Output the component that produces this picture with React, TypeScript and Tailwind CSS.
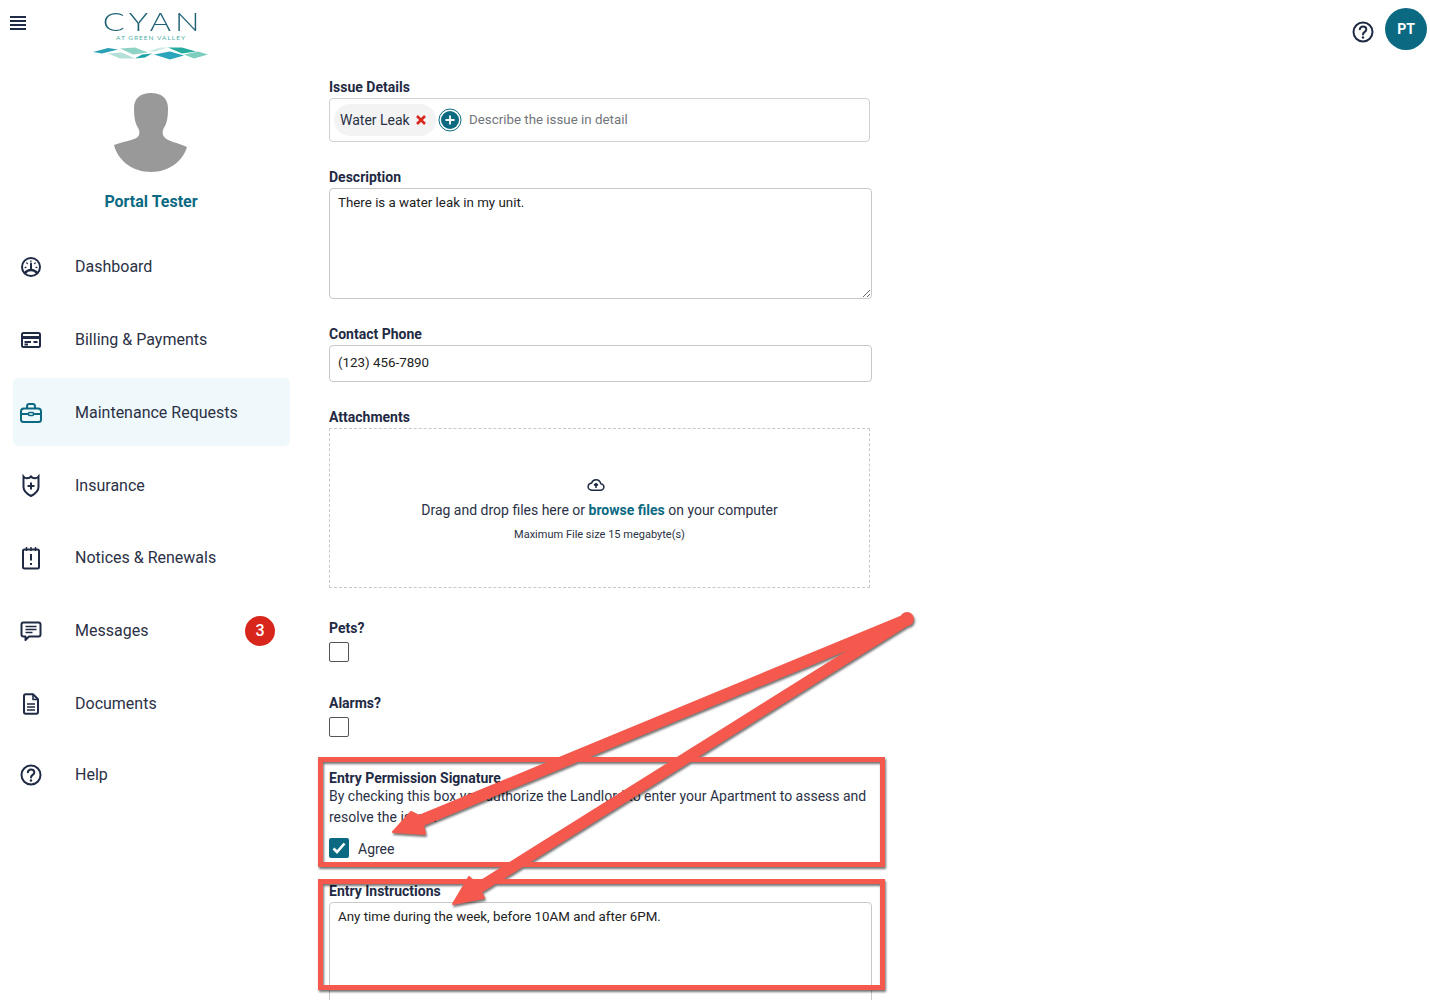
import { ReactNode } from "react";

const ink = "#1f2a44";

function GaugeIcon() {
  return (
    <svg width="24" height="24" viewBox="0 0 24 24" fill="none" stroke={ink} strokeWidth="2" strokeLinecap="round">
      <circle cx="12" cy="12" r="9" />
      <path d="M12 13.500V8.500" strokeWidth="2" />
      <path d="M6 18c1.500-2 3.500-3 6-3s4.500 1 6 3" strokeWidth="2.600" />
      <path d="M6.200 12.500l.8-.2M7.800 8l.6.6M11.900 5.800v.6M16.200 8l-.6.6M17.800 12.500l-.8-.2" strokeWidth="1.300" />
    </svg>
  );
}

function CardIcon() {
  return (
    <svg width="24" height="24" viewBox="0 0 24 24" fill="none" stroke={ink} strokeWidth="2">
      <rect x="3" y="5" width="18" height="14" rx="1.500" />
      <path d="M3 9.500h18" strokeWidth="3" />
      <path d="M5.500 14h6.500M5.500 16.500h3.500M14.500 14h4" strokeWidth="1.800" />
    </svg>
  );
}

function BriefcaseIcon() {
  return (
    <svg width="24" height="24" viewBox="0 0 24 24" fill="none" stroke="#0b6a82" strokeWidth="2">
      <path d="M2 10.500c0-2 1-3 3-3h14c2 0 3 1 3 3v8c0 1.500-1 2.500-2.500 2.500h-15C3 21 2 20 2 18.500z" />
      <path d="M8 7.500V5.500C8 4 9 3 10 3h4c1 0 2 1 2 2.500v2" />
      <path d="M2 13h7M15 13h7" />
      <rect x="9.500" y="11.500" width="5" height="3" rx="1" strokeWidth="1.600" />
    </svg>
  );
}

function ShieldIcon() {
  return (
    <svg width="24" height="24" viewBox="0 0 24 24" fill="none" stroke={ink} strokeWidth="2" strokeLinejoin="miter">
      <path d="M4.500 2.500v10.500c0 4 3.200 6.800 7.500 9 4.300-2.200 7.500-5 7.500-9V2.500c-1 1.300-3 2-4.500 1.500-1 0-2.200-.6-3-1.500-.8.900-2 1.500-3 1.500-1.500.5-3.500-.2-4.500-1.500z" />
      <path d="M12 8.500v7M8.500 12h7" />
    </svg>
  );
}

function NotepadIcon() {
  return (
    <svg width="24" height="24" viewBox="0 0 24 24" fill="none" stroke={ink} strokeWidth="2">
      <rect x="4" y="3.500" width="16" height="19" rx="1.500" />
      <path d="M7.500 1v4M12 1v4M16.500 1v4" strokeWidth="1.500" />
      <path d="M12 8v6.500M12 17v2" />
    </svg>
  );
}

function MessageIcon() {
  return (
    <svg width="24" height="24" viewBox="0 0 24 24" fill="none" stroke={ink} strokeWidth="2" strokeLinejoin="round">
      <path d="M4.500 3.500h15c1 0 2 1 2 2v10c0 1-1 2-2 2H10l-3.500 3.500v-3.500h-2c-1 0-2-1-2-2v-10c0-1 1-2 2-2z" />
      <path d="M6.500 7.500h11M6.500 10.500h11M6.500 13.500h7" strokeWidth="1.600" />
    </svg>
  );
}

function DocIcon() {
  return (
    <svg width="24" height="24" viewBox="0 0 24 24" fill="none" stroke={ink} strokeWidth="2" strokeLinejoin="round">
      <path d="M5 4c0-1 .8-1.700 1.700-1.700H14l5 5V20c0 1-.8 1.700-1.700 1.700H6.700C5.800 21.700 5 21 5 20z" />
      <path d="M14 2.500v5h5" strokeWidth="1.600" />
      <path d="M8 12h8M8 15h8M8 18h8" strokeWidth="1.500" />
    </svg>
  );
}

function HelpIcon() {
  return (
    <svg width="24" height="24" viewBox="0 0 24 24" fill="none" stroke={ink} strokeWidth="2" strokeLinecap="round">
      <circle cx="12" cy="12" r="9.500" />
      <path d="M8.800 9.300c.3-1.700 1.600-2.700 3.300-2.700 1.800 0 3.200 1.100 3.200 2.800 0 2.500-3.300 2.500-3.300 5" />
      <path d="M12 17.500h.01" strokeWidth="2.400" />
    </svg>
  );
}

const navItems: { label: string; icon: ReactNode; gap: string; active?: boolean; badge?: string }[] = [
  { label: "Dashboard", icon: <GaugeIcon />, gap: "mb-[5px]" },
  { label: "Billing & Payments", icon: <CardIcon />, gap: "mb-[5px]" },
  { label: "Maintenance Requests", icon: <BriefcaseIcon />, gap: "mb-[5px]", active: true },
  { label: "Insurance", icon: <ShieldIcon />, gap: "mb-[4px]" },
  { label: "Notices & Renewals", icon: <NotepadIcon />, gap: "mb-[5px]" },
  { label: "Messages", icon: <MessageIcon />, gap: "mb-[5px]", badge: "3" },
  { label: "Documents", icon: <DocIcon />, gap: "mb-[3px]" },
  { label: "Help", icon: <HelpIcon />, gap: "" },
];

function Logo() {
  return (
    <div className="ml-[67px] mt-[10px] flex h-[50px] w-[116px] flex-col items-center">
      <div className="h-[23px] scale-x-[1.3] pl-[3px] font-['Lato'] text-[25px] font-light leading-[23px] tracking-[3px] text-[#1f6276]">CYAN</div>
      <div className="h-[9px] font-['Lato'] text-[6.500px] leading-[9px] tracking-[1px] text-[#4fb0a5]">AT GREEN VALLEY</div>
      <svg width="116" height="13" viewBox="93 46.500 116 13" className="mt-[5px]">
        <polygon points="93,51.500 108,47.500 118,49 102,53" fill="#2a9fb5" />
        <polygon points="120,48 135,47 148,52 133,54" fill="#8fd3c7" />
        <polygon points="108,53 122,52 135,58 120,58" fill="#b5e0d8" />
        <polygon points="135,58 142,54 152,53 145,57" fill="#1ba3a8" />
        <polygon points="148,51 160,47 168,47 155,51" fill="#cdeae5" />
        <polygon points="168,47 182,47 196,51 182,53" fill="#27ab9f" />
        <polygon points="154,54 170,51 184,55 170,59" fill="#2aa5bb" />
        <polygon points="184,54 198,51 208,54 194,58" fill="#7fcdbf" />
      </svg>
    </div>
  );
}

function Sidebar() {
  return (
    <aside className="w-[303px] shrink-0">
      <div className="flex h-[62px]">
        <div className="ml-[10px] mt-[16px] flex h-[14px] w-[16px] flex-col justify-between">
          <span className="h-[2px] bg-[#1f2a44]" />
          <span className="h-[2px] bg-[#1f2a44]" />
          <span className="h-[2px] bg-[#1f2a44]" />
          <span className="h-[2px] bg-[#1f2a44]" />
        </div>
        <Logo />
      </div>
      <svg width="74" height="80" viewBox="0 0 74 80" className="ml-[114px] mt-[31px]">
        <path
          d="M37 0c10 0 17 5 17 15 0 9-1 14-3 18-2 3-3 6-2 9 1 3 5 5 10 7 5 1 9 3 14 5-4 14-18 25-36 25S4 68 0 52c5-2 9-3 14-4 6-2 10-3 11-6 1-3 0-6-2-9-2-4-3-9-3-18C20 5 27 0 37 0z"
          fill="#999999"
        />
      </svg>
      <div className="mt-[19px] w-[302px] text-center font-['Roboto'] text-base font-bold leading-[20px] text-[#0b6a82]">Portal Tester</div>
      <nav className="mt-[20px] px-[13px]">
        {navItems.map((item) => (
          <div
            key={item.label}
            className={`flex h-[68px] items-center gap-[32px] rounded-md pl-[6px] pr-[15px] pt-[2px] ${item.gap} ${item.active ? "bg-[#eff8fa]" : ""}`}
          >
            <span className="flex h-[24px] w-[24px] items-center justify-center">{item.icon}</span>
            <span className="font-['Roboto'] text-base text-[#2b3145]">{item.label}</span>
            {item.badge && (
              <span className="ml-auto flex h-[30px] w-[30px] items-center justify-center rounded-full bg-[#d9261c] font-['Roboto'] text-base font-medium text-white">
                {item.badge}
              </span>
            )}
          </div>
        ))}
      </nav>
    </aside>
  );
}

function Label({ children, className = "" }: { children: ReactNode; className?: string }) {
  return <div className={`font-['Roboto'] text-sm font-bold leading-[16px] text-[#1f2a44] ${className}`}>{children}</div>;
}

function Form() {
  const fieldText = "font-['Roboto'] text-[13.330px] text-[#222222]";
  return (
    <main className="ml-[26px] w-[545px] shrink-0 pt-[79px]">
      <Label>Issue Details</Label>
      <div className="mt-[3px] flex h-[44px] w-[541px] items-center rounded border border-[#d0d0d0] pl-[4px]">
        <div className="flex h-[32px] w-[102px] items-center rounded-full bg-[#f3f3f4] pl-[6px] font-['Roboto'] text-sm text-[#2b3145]">
          Water Leak
          <svg width="10" height="10" viewBox="0 0 10 10" className="ml-[6px]" stroke="#d9261c" strokeWidth="2.600">
            <path d="M1 1l8 8M9 1l-8 8" />
          </svg>
        </div>
        <svg width="24" height="24" viewBox="0 0 24 24" className="ml-[2px]">
          <circle cx="12" cy="12" r="11" fill="none" stroke="#0b6a82" strokeWidth="1" />
          <circle cx="12" cy="12" r="9" fill="#0b6a82" />
          <path d="M12 7.500v9M7.500 12h9" stroke="#fff" strokeWidth="1.800" />
        </svg>
        <span className="ml-[7px] font-['Roboto'] text-[13.330px] text-[#71757a]">Describe the issue in detail</span>
      </div>

      <Label className="mt-[27px]">Description</Label>
      <textarea
        readOnly
        defaultValue="There is a water leak in my unit."
        className={`mt-[3px] block h-[111px] w-[543px] rounded border border-[#c8c8c8] px-[8px] py-[6px] leading-[16px] outline-none ${fieldText}`}
      />

      <Label className="mt-[27px]">Contact Phone</Label>
      <input
        readOnly
        defaultValue="(123) 456-7890"
        className={`mt-[3px] block h-[37px] w-[543px] rounded border border-[#c8c8c8] px-[8px] pb-[2px] outline-none ${fieldText}`}
      />

      <Label className="mt-[27px]">Attachments</Label>
      <div className="mt-[3px] flex h-[160px] w-[541px] flex-col items-center border border-dashed border-[#c8c8c8] pt-[47px]">
        <svg width="20" height="18" viewBox="0 0 24 24" fill="none" stroke="#1f2a44" strokeWidth="2" strokeLinejoin="round" className="mr-[8px]">
          <path d="M7 19h11c2.500 0 4.500-2 4.500-4.300 0-2.300-1.800-4-4-4.200C17.800 7.500 15.300 5 12 5 9.300 5 7 6.800 6.200 9.300 3.500 9.800 1.500 11.800 1.500 14.300 1.500 17 4 19 7 19z" />
          <path d="M12 16v-6M9.500 12.500 12 10l2.500 2.500" />
        </svg>
        <div className="mt-[6px] font-['Roboto'] text-sm text-[#2b3145]">
          Drag and drop files here or <span className="font-bold text-[#0b6a82]">browse files</span> on your computer
        </div>
        <div className="mt-[8px] font-['Roboto'] text-[11px] leading-[14px] text-[#2b3145]">Maximum File size 15 megabyte(s)</div>
      </div>

      <Label className="mt-[32px]">Pets?</Label>
      <div className="mt-[6px] h-[20px] w-[20px] rounded-[2px] border border-[#555555]" />

      <Label className="mt-[33px]">Alarms?</Label>
      <div className="mt-[6px] h-[20px] w-[20px] rounded-[2px] border border-[#555555]" />

      <Label className="mt-[33px]">Entry Permission Signature</Label>
      <p className="w-[541px] font-['Roboto'] text-sm leading-[21px] text-[#2b3145]">
        By checking this box you authorize the Landlord to enter your Apartment to assess and resolve the issue.
      </p>
      <div className="mt-[10px] flex h-[20px] items-center gap-[9px]">
        <span className="flex h-[20px] w-[20px] items-center justify-center rounded-[2px] bg-[#0b6a82]">
          <svg width="14" height="12" viewBox="0 0 14 12" fill="none" stroke="#fff" strokeWidth="2.600">
            <path d="M1.500 6.500l3.500 3.500 7.500-8.500" />
          </svg>
        </span>
        <span className="pt-[2px] font-['Roboto'] text-sm text-[#2b3145]">Agree</span>
      </div>

      <Label className="mt-[25px]">Entry Instructions</Label>
      <textarea
        readOnly
        defaultValue="Any time during the week, before 10AM and after 6PM."
        className={`mt-[3px] block h-[111px] w-[543px] rounded border border-[#c8c8c8] px-[8px] py-[6px] leading-[16px] outline-none ${fieldText}`}
      />
    </main>
  );
}

// red annotations that were drawn on top of the screenshot
function Annotations() {
  return (
    <svg
      width="1430"
      height="1000"
      viewBox="0 0 1430 1000"
      className="pointer-events-none absolute left-0 top-0 drop-shadow-[1px_2px_1px_rgba(0,0,0,0.55)]"
    >
      <g fill="none" stroke="#f5594e" strokeWidth="5">
        <rect x="320.500" y="759.500" width="562" height="105" />
        <rect x="320.500" y="881.500" width="562" height="106" />
      </g>
      <g fill="#f5594e" stroke="#f5594e" strokeWidth="2" strokeLinejoin="round">
        <path d="M906.500 614.300 419 816 411 812 393 832 425 834 423 825 909.500 623.700Z" />
        <path d="M906 614.600 476 884 469 877 453 904 484 898 481 892 910 623.400Z" />
        <circle cx="907" cy="619" r="6" />
      </g>
    </svg>
  );
}

export default function App() {
  return (
    <div className="relative flex h-[1000px] overflow-hidden bg-white">
      <Sidebar />
      <Form />
      <div className="ml-auto flex items-center gap-[10px] self-start pr-[3px] pt-[8px]">
        <span className="mt-[6px]">
          <HelpIcon />
        </span>
        <div className="flex h-[42px] w-[42px] items-center justify-center rounded-full bg-[#0b6a82] pb-[1px] font-['Roboto'] text-sm font-bold text-white">
          PT
        </div>
      </div>
      <Annotations />
    </div>
  );
}
